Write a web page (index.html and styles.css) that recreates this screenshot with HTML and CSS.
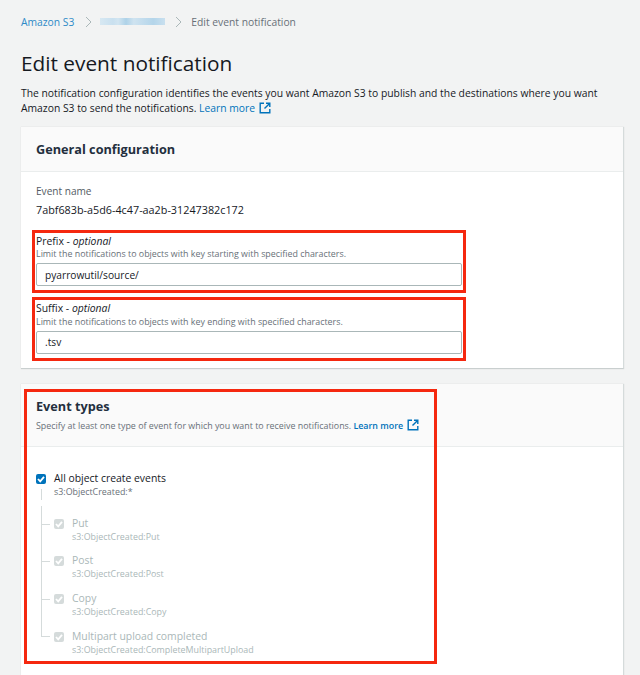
FILE: index.html
```html
<!DOCTYPE html>
<html lang="en">
<head>
<meta charset="utf-8">
<title>Edit event notification</title>
<link rel="stylesheet" href="styles.css">
</head>
<body>
<main class="page">
  <nav class="crumbs">
    <a class="link" href="#">Amazon S3</a>
    <svg class="chev" viewBox="0 0 7 12"><path d="M1 1l5 5-5 5"/></svg>
    <span class="blurred"></span>
    <svg class="chev" viewBox="0 0 7 12"><path d="M1 1l5 5-5 5"/></svg>
    <span class="current">Edit event notification</span>
  </nav>
  <h1 class="title">Edit event notification</h1>
  <p class="intro">The notification configuration identifies the events you want Amazon S3 to publish and the destinations where you want Amazon S3 to send the notifications. <a class="link" href="#">Learn more</a> <svg class="ext" viewBox="0 0 12 12"><path d="M5 1.2H1.2v9.6h9.6V7M7 1.2h3.8V5M10.6 1.4L5.5 6.5"/></svg></p>

  <section class="card">
    <header class="card-head"><h2 class="card-title">General configuration</h2></header>
    <div class="card-body">
      <div class="label muted">Event name</div>
      <div class="value">7abf683b-a5d6-4c47-aa2b-31247382c172</div>
      <div class="field field-prefix">
        <div class="label">Prefix - <em>optional</em></div>
        <div class="hint">Limit the notifications to objects with key starting with specified characters.</div>
        <input class="input" type="text" value="pyarrowutil/source/">
        <span class="mark"></span>
      </div>
      <div class="field field-suffix">
        <div class="label">Suffix - <em>optional</em></div>
        <div class="hint">Limit the notifications to objects with key ending with specified characters.</div>
        <input class="input" type="text" value=".tsv">
        <span class="mark"></span>
      </div>
    </div>
  </section>

  <section class="card card-types">
    <span class="mark mark-types"></span>
    <header class="card-head types-head">
      <h2 class="card-title">Event types</h2>
      <p class="hint types-hint">Specify at least one type of event for which you want to receive notifications. <a class="link strong" href="#">Learn more</a> <svg class="ext" viewBox="0 0 12 12"><path d="M5 1.2H1.2v9.6h9.6V7M7 1.2h3.8V5M10.6 1.4L5.5 6.5"/></svg></p>
    </header>
    <div class="types-body">
      <div class="check-row">
        <span class="box on"><svg viewBox="0 0 10 10"><path d="M2 5l2.2 2.3L8 2.8"/></svg></span>
        <div><div class="check-label">All object create events</div><div class="check-sub">s3:ObjectCreated:*</div></div>
      </div>
      <div class="tree">
        <div class="check-row child first">
          <span class="box off"><svg viewBox="0 0 10 10"><path d="M2 5l2.2 2.3L8 2.8"/></svg></span>
          <div><div class="check-label">Put</div><div class="check-sub">s3:ObjectCreated:Put</div></div>
        </div>
        <div class="check-row child">
          <span class="box off"><svg viewBox="0 0 10 10"><path d="M2 5l2.2 2.3L8 2.8"/></svg></span>
          <div><div class="check-label">Post</div><div class="check-sub">s3:ObjectCreated:Post</div></div>
        </div>
        <div class="check-row child">
          <span class="box off"><svg viewBox="0 0 10 10"><path d="M2 5l2.2 2.3L8 2.8"/></svg></span>
          <div><div class="check-label">Copy</div><div class="check-sub">s3:ObjectCreated:Copy</div></div>
        </div>
        <div class="check-row child">
          <span class="box off"><svg viewBox="0 0 10 10"><path d="M2 5l2.2 2.3L8 2.8"/></svg></span>
          <div><div class="check-label">Multipart upload completed</div><div class="check-sub">s3:ObjectCreated:CompleteMultipartUpload</div></div>
        </div>
      </div>
    </div>
  </section>
</main>
</body>
</html>
```
FILE: styles.css
```css
* { box-sizing: border-box; }
html, body { margin: 0; height: 100%; overflow: hidden; }
body { background: #f2f3f3; font-family: "Open Sans", "Noto Sans", sans-serif; color: #16191f; }
.page { padding: 0 16px 0 21px; height: 675px; overflow: hidden; }
.link { color: #0073bb; text-decoration: none; }
.crumbs { display: flex; align-items: center; height: 15px; margin-top: 14px; font-size: 10.3px; }
.crumbs .link { color: #2d8ac7; }
.chev { flex: none; width: 7px; height: 12px; margin: 0 8px 0 11px; fill: none; stroke: #aab7b8; stroke-width: 1; }
.blurred { flex: none; width: 65px; height: 7px; background: linear-gradient(90deg, #d7e8f2, #c9e0ef 20%, #d2e5f1 28%, #aed2e8 40%, #cfe3f0 52%, #b4d5ea 82%, #c9e0ef); }
.blurred + .chev { margin-left: 10px; margin-right: 9px; }
.current { color: #687078; }
.title { margin: 19px 0 0; font-size: 20.8px; line-height: 30px; font-weight: 400; color: #16191f; }
.intro { margin: 8px 0 0; width: 600px; font-size: 10.33px; line-height: 15px; color: #16191f; }
.ext { width: 12px; height: 12px; vertical-align: -2px; margin-left: 1px; fill: none; stroke: #0073bb; stroke-width: 1.4; }
.card { position: relative; width: 603px; margin-top: 11px; background: #fff; border-right: 1px solid #d5dbdb; border-bottom: 1px solid #c9cfcf; box-shadow: 0 0 1px rgba(0,28,36,.15); }
.card-types { margin-top: 15px; height: 320px; }
.card-head { height: 45px; padding: 14px 15px 0; background: #fafafa; border-bottom: 1px solid #eaeded; }
.card-title { margin: 0; font-size: 12.7px; line-height: 17px; font-weight: 700; color: #232f3e; }
.card-body { padding: 12px 15px 0; height: 196px; }
.label { font-size: 10.4px; line-height: 14px; color: #16191f; }
.muted { color: #545b64; font-size: 10.1px; }
.value { margin-top: 5px; font-size: 10.8px; line-height: 14px; }
.field { position: relative; width: 427px; }
.field-prefix { margin-top: 16.5px; }
.field-suffix { margin-top: 15px; }
.hint { margin-top: .5px; font-size: 8.9px; line-height: 11px; color: #687078; }
.input { display: block; width: 426px; height: 23px; margin-top: 4px; padding: 0 8px; border: 1px solid #aab7b8; border-radius: 2px; background: #fff; font: 10.2px "Open Sans", sans-serif; color: #16191f; }
.mark { position: absolute; border: 3px solid #f5280f; pointer-events: none; }
.field-prefix .mark { left: -4px; right: -3px; top: -4px; bottom: -7px; }
.field-suffix .mark { left: -4px; right: -3px; top: -4px; bottom: -7px; }
.mark-types { left: 3px; top: 5px; width: 413px; height: 275px; z-index: 1; }
.types-head { height: 63px; padding-top: 14px; }
.types-hint { margin: 3.5px 0 0; }
.strong { font-weight: 600; }
.types-head .ext { margin-left: 2px; }
.types-body { padding: 24px 15px 0; }
.check-row { display: flex; gap: 8px; }
.box { flex: none; width: 10px; height: 10px; margin-top: 3px; border-radius: 2px; }
.box svg { display: block; width: 10px; height: 10px; fill: none; stroke: #fff; stroke-width: 1.8; }
.on { background: #0073bb; }
.off { background: #d5dbdb; }
.check-label { font-size: 10.4px; line-height: 15px; color: #16191f; }
.check-sub { font-size: 8.9px; line-height: 11px; color: #687078; }
.tree { position: relative; margin-top: 18.5px; margin-left: 5px; }
.tree::before { content: ""; position: absolute; left: 0; top: -26.5px; height: 11px; border-left: 1px solid #d5dbdb; }
.child { position: relative; padding-left: 13px; height: 37.7px; }
.child::before { content: ""; position: absolute; left: 0; top: -30.2px; height: 38px; width: 8px; border-left: 1px solid #d5dbdb; border-bottom: 1px solid #d5dbdb; }
.child.first::before { top: -10px; height: 18px; }
.child .check-label { color: #aab7b8; }
.child .check-sub { color: #aab7b8; }
```
